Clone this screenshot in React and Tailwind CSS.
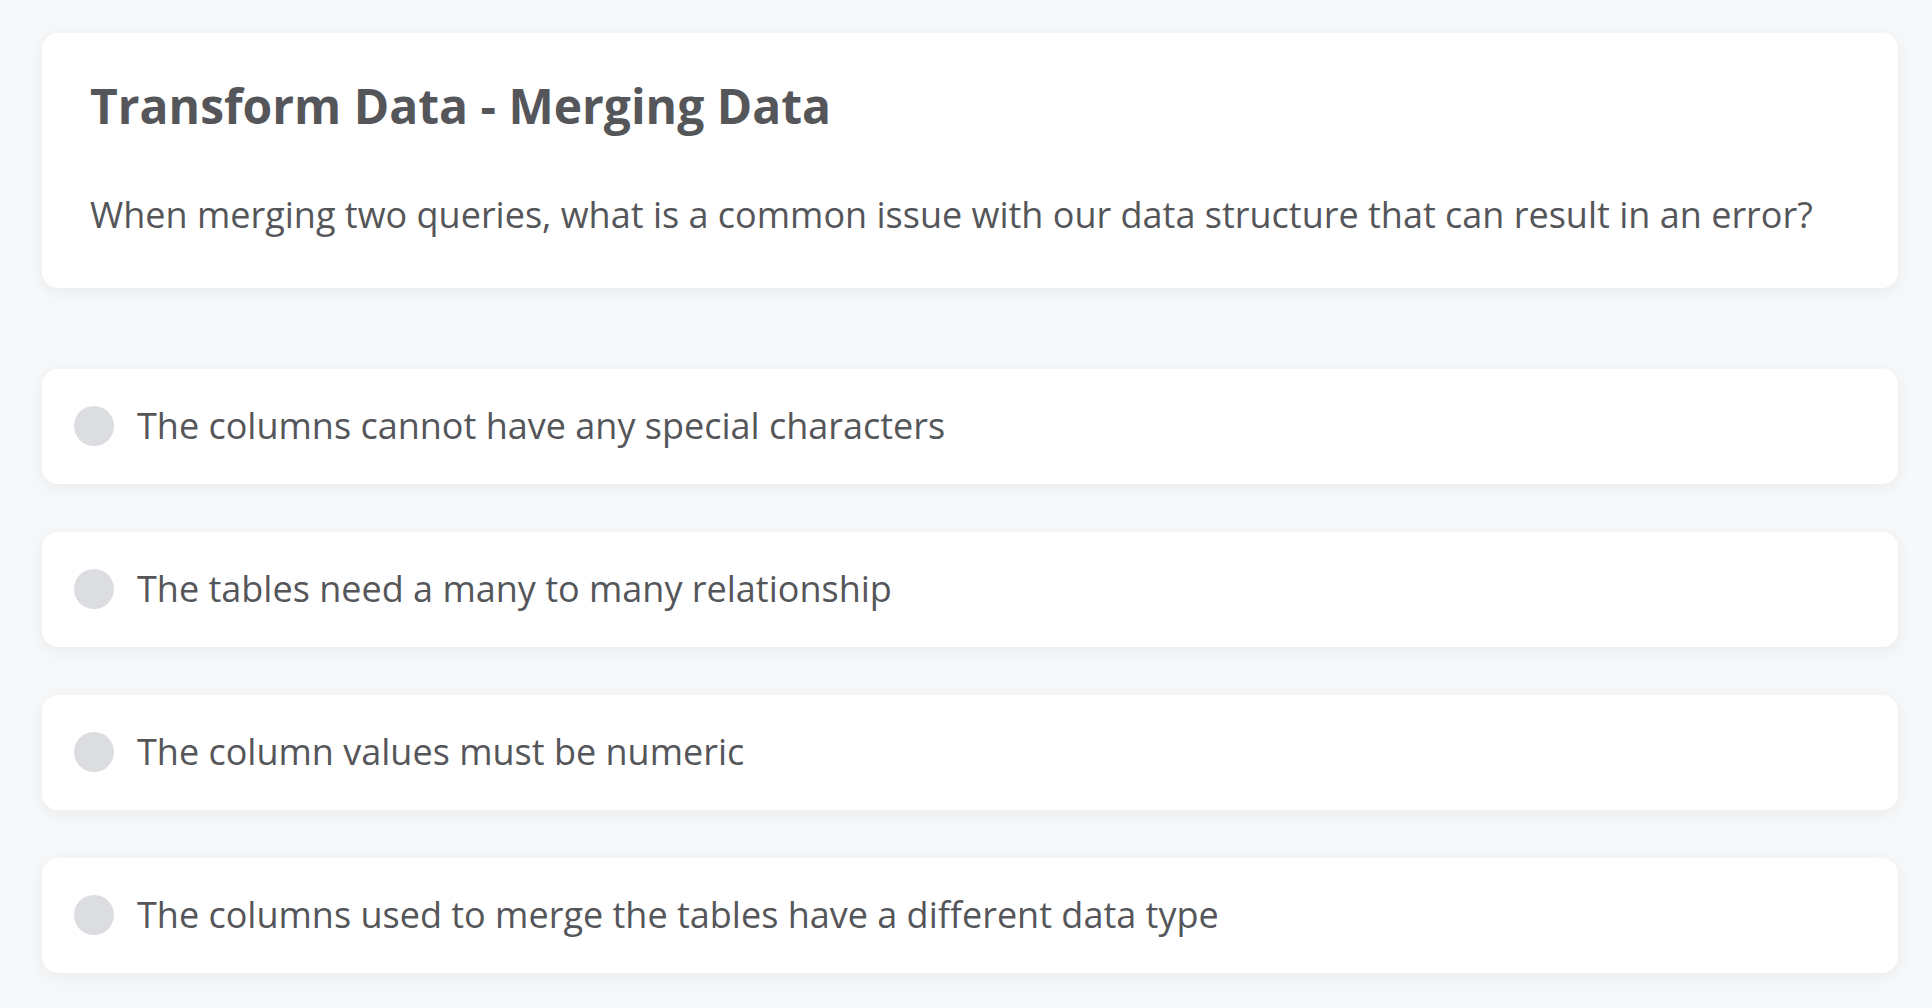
export default function App() {
  const options = [
    "The columns cannot have any special characters",
    "The tables need a many to many relationship",
    "The column values must be numeric",
    "The columns used to merge the tables have a different data type",
  ];
  return (
    <div
      className="min-h-screen bg-[#f7f8fa] pl-[42px] pr-[34px] pt-[33px] pb-[36px] text-[#55565a]"
      style={{ fontFamily: '"Open Sans", "Noto Sans", sans-serif' }}
    >
      <div className="rounded-2xl bg-white pl-[48px] pr-[40px] pt-[44px] pb-[46px] shadow-[0_4px_18px_rgba(0,0,0,0.06)]">
        <h1 className="text-[48px] font-bold leading-[1.2]">
          Transform Data - Merging Data
        </h1>
        <p className="mt-[53px] whitespace-nowrap text-[36px] leading-[1.5]">
          When merging two queries, what is a common issue with our data structure that can result in an error?
        </p>
      </div>
      <div className="mt-[81px] flex flex-col gap-[48px]">
        {options.map((o) => (
          <div
            key={o}
            className="flex h-[115px] items-center gap-[23px] rounded-2xl bg-white px-[32px] shadow-[0_4px_18px_rgba(0,0,0,0.06)]"
          >
            <span className="h-[40px] w-[40px] shrink-0 rounded-full bg-[#dcdde0]" />
            <span className="text-[36px] leading-[1.5]">{o}</span>
          </div>
        ))}
      </div>
    </div>
  );
}
